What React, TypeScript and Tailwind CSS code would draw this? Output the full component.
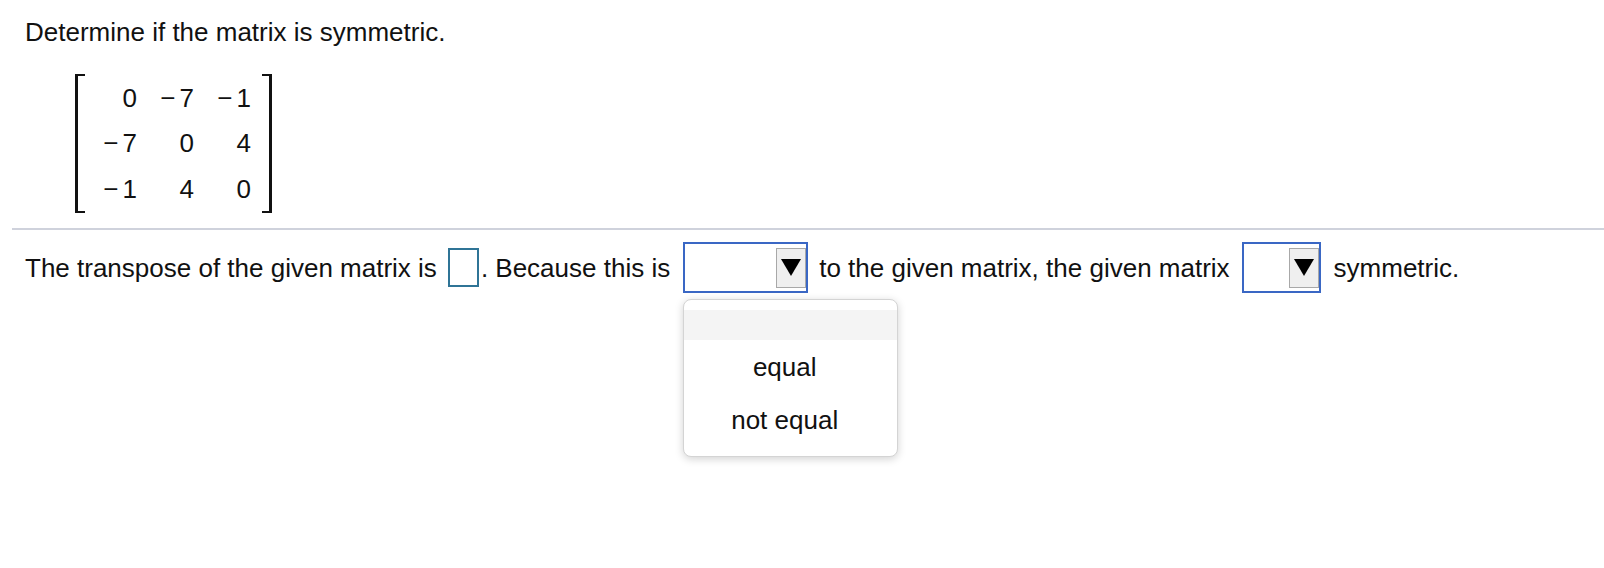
import React from 'react'

const MATRIX = [
  ['0', '-7', '-1'],
  ['-7', '0', '4'],
  ['-1', '4', '0'],
]

function Entry({ value }: { value: string }) {
  const negative = value.startsWith('-')
  return (
    <div className="flex h-[45px] items-center justify-end">
      {negative && <span className="mr-[4px]">−</span>}
      <span>{negative ? value.slice(1) : value}</span>
    </div>
  )
}

function Arrow() {
  return (
    <svg width="20" height="17" viewBox="0 0 20 17">
      <polygon points="0,0 20,0 10,17" fill="#000" />
    </svg>
  )
}

function Dropdown({ width }: { width: string }) {
  return (
    <div className={`flex h-[51px] items-center justify-end border-2 border-[#3a67c4] bg-white ${width}`}>
      <div className="flex h-[40px] w-[30px] items-center justify-center border border-[#a8a8a8] bg-[#efefef]">
        <Arrow />
      </div>
    </div>
  )
}

export default function App() {
  return (
    <div
      className="h-[568px] w-[1604px] bg-white text-[26px] leading-[30px] text-[#111]"
      style={{ fontFamily: '"Liberation Sans", Arial, sans-serif' }}
    >
      <div className="pl-[25px] pt-[17px]">Determine if the matrix is symmetric.</div>

      <div className="mt-[27px] flex h-[139px] pl-[75px]">
        <div className="w-[10px] border-y-2 border-l-[3px] border-[#111]" />
        <div className="ml-[18px] grid grid-cols-[34px_34px_34px] gap-x-[23px] py-[1px]">
          {MATRIX.flat().map((v, i) => (
            <Entry key={i} value={v} />
          ))}
        </div>
        <div className="ml-[11px] w-[10px] border-y-2 border-r-[3px] border-[#111]" />
      </div>

      <div className="ml-[12px] mt-[15px] h-[2px] bg-[#cfd2dc]" />

      <div className="mt-[12px] flex items-center pl-[25px]">
        <span>The transpose of the given matrix is</span>
        <div className="ml-[11px] h-[39px] w-[31px] border-2 border-[#2f7496]" />
        <span className="ml-[2px]">. Because this is</span>
        <div className="relative ml-[13px]">
          <Dropdown width="w-[125px]" />
          <div className="absolute left-0 top-[57px] w-[215px] rounded-[8px] border border-[#d4d4d4] bg-white pb-[10px] pt-[10px] shadow-[0_2px_8px_rgba(0,0,0,0.18)]">
            <div className="h-[30px] bg-[#f4f4f4]" />
            <div className="flex h-[53px] items-center justify-center pr-[12px]">equal</div>
            <div className="flex h-[53px] items-center justify-center pr-[12px]">not equal</div>
          </div>
        </div>
        <span className="ml-[11px]">to the given matrix, the given matrix</span>
        <div className="ml-[12px]">
          <Dropdown width="w-[79px]" />
        </div>
        <span className="ml-[13px]">symmetric.</span>
      </div>
    </div>
  )
}
